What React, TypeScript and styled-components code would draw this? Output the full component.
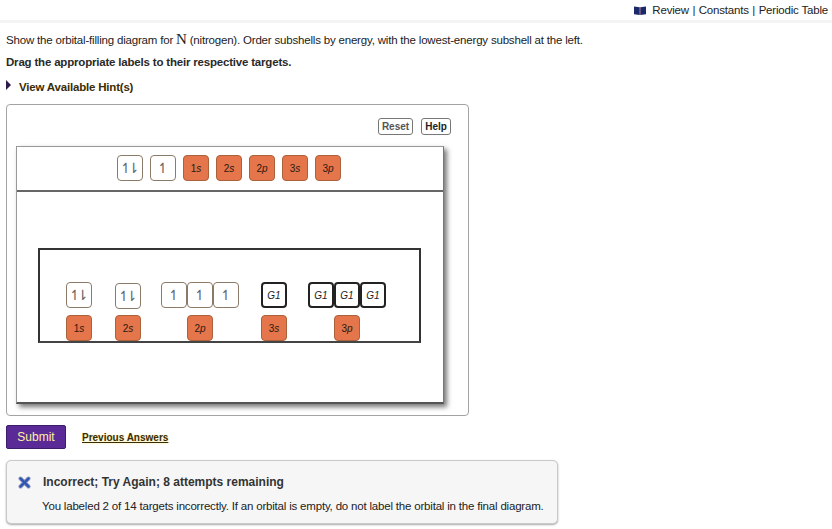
import React from 'react';
import styled, { createGlobalStyle } from 'styled-components';

const GlobalStyle = createGlobalStyle`
  html, body {
    margin: 0;
    padding: 0;
    background: #fff;
    font-family: "Liberation Sans", Arial, sans-serif;
    color: #222;
  }
`;

const Page = styled.div`
  width: 832px;
  height: 529px;
  overflow: hidden;
`;

const TopBar = styled.div`
  height: 20px;
  border-bottom: 3px solid #f4f4f4;
  box-sizing: content-box;
  display: flex;
  align-items: center;
  justify-content: flex-end;
  padding-right: 4px;
  font-size: 11.5px;
  letter-spacing: -0.19px;
  color: #222;
`;

const BookIcon = styled.svg`
  width: 12px;
  height: 9px;
  margin-right: 6px;
`;

const Intro = styled.p`
  margin: 9px 0 0 6px;
  font-size: 11.5px;
  letter-spacing: -0.19px;
  line-height: 15px;
  height: 15px;
`;

const Element = styled.span`
  font-family: "Liberation Serif", serif;
  font-size: 15px;
`;

const Instruction = styled.p`
  margin: 8px 0 0 6px;
  font-size: 11.5px;
  letter-spacing: -0.19px;
  line-height: 15px;
  font-weight: bold;
  color: #2a2a2a;
`;

const HintRow = styled.div`
  margin: 9px 0 0 6px;
  display: flex;
  align-items: center;
  height: 16px;
  font-size: 11.5px;
  letter-spacing: -0.19px;
  font-weight: bold;
  color: #3a2c05;
`;

const HintArrow = styled.span`
  width: 0;
  height: 0;
  margin: -4px 8px 0 0;
  border-left: 5px solid #2e1a4a;
  border-top: 5px solid transparent;
  border-bottom: 5px solid transparent;
`;

const Panel = styled.div`
  margin: 9px 0 0 6px;
  width: 463px;
  height: 312px;
  box-sizing: border-box;
  border: 1px solid #a3a3a3;
  border-radius: 4px;
  padding: 13px 17px 0 9px;
`;

const Toolbar = styled.div`
  display: flex;
  justify-content: flex-end;
  gap: 8px;
`;

const ToolButton = styled.button<{ $w: number; $dark?: boolean }>`
  width: ${p => p.$w}px;
  height: 17px;
  box-sizing: border-box;
  padding: 0;
  background: #fff;
  border: 1px solid #777;
  border-radius: 3px;
  font: bold 10px "Liberation Sans", Arial, sans-serif;
  color: ${p => (p.$dark ? '#222' : '#555')};
`;

const Diagram = styled.div`
  margin-top: 11px;
  width: 428px;
  height: 258px;
  box-sizing: border-box;
  border-top: 1px solid #999;
  border-left: 1px solid #999;
  border-right: 1px solid #777;
  border-bottom: 2px solid #555;
  box-shadow: 3px 3px 5px #777;
`;

const Tray = styled.div`
  height: 45px;
  box-sizing: border-box;
  border-bottom: 2px solid #666;
  display: flex;
  justify-content: flex-start;
  align-items: flex-start;
  gap: 7px;
  padding: 8px 0 0 100px;
`;

const Chip = styled.div<{ $w?: number }>`
  width: ${p => p.$w ?? 26}px;
  height: 26px;
  box-sizing: border-box;
  display: flex;
  align-items: center;
  justify-content: center;
  border-radius: 4px;
  font-size: 10px;
`;

const ArrowChip = styled(Chip)`
  background: #fff;
  border: 1px solid #8c7a68;
  font-family: "DejaVu Sans", sans-serif;
  font-size: 14px;
  letter-spacing: -4px;
  padding-right: 4px;
  color: #666;
`;

const LabelChip = styled(Chip)`
  background: #e5754a;
  border: 1px solid #a9623c;
  color: #2a1a12;
`;

const GhostChip = styled(Chip)`
  background: #fff;
  border: 2px solid #222;
  color: #222;
  font-style: italic;
  font-weight: normal;
`;

const Sub = styled.i`
  font-style: italic;
`;

const Board = styled.div`
  margin: 56px 0 0 21px;
  width: 383px;
  height: 95px;
  box-sizing: border-box;
  border: 2px solid #333;
  border-bottom-color: #444;
  display: flex;
  align-items: flex-start;
  padding: 32px 0 0 26px;
`;

const Column = styled.div<{ $gap: number; $drop?: number }>`
  margin-left: ${p => p.$gap}px;
  display: flex;
  flex-direction: column;
  align-items: center;
  gap: ${p => 7 - (p.$drop ?? 0)}px;
`;

const Cells = styled.div<{ $drop?: number }>`
  display: flex;
  margin-top: ${p => p.$drop ?? 0}px;
`;

const Footer = styled.div`
  margin: 9px 0 0 6px;
  display: flex;
  align-items: center;
  gap: 16px;
`;

const Submit = styled.button`
  width: 60px;
  height: 24px;
  padding: 0;
  background: #5a2a96;
  border: 1px solid #3d1c6b;
  border-radius: 2px;
  font: 12px "Liberation Sans", Arial, sans-serif;
  color: #fff0a0;
`;

const PrevLink = styled.a`
  font-size: 10px;
  font-weight: bold;
  color: #3a2c05;
  text-decoration: underline;
  text-shadow: 0 0 2px #ffe98a;
`;

const Feedback = styled.div`
  margin: 11px 0 0 6px;
  width: 552px;
  height: 64px;
  box-sizing: border-box;
  background: #f6f6f6;
  border: 1px solid #c9c9c9;
  border-radius: 5px;
  box-shadow: 0 1px 2px #aaa;
  padding: 14px 0 0 11px;
`;

const FeedbackHead = styled.div`
  display: flex;
  align-items: center;
  gap: 12px;
  font-size: 12px;
  font-weight: bold;
  color: #333;
`;

const CrossIcon = styled.svg`
  width: 13px;
  height: 13px;
`;

const FeedbackBody = styled.p`
  margin: 10px 0 0 24px;
  font-size: 11.5px;
  letter-spacing: -0.19px;
  line-height: 14px;
  color: #222;
  white-space: nowrap;
`;

const Pipe = styled.span`
  margin: 0 3.5px;
`;

const PAIR = '↿⇂';
const ONE = '↿';

const labels: [string, string][] = [['1', 's'], ['2', 's'], ['2', 'p'], ['3', 's'], ['3', 'p']];

const Label = ({ n, s }: { n: string; s: string }) => (
  <LabelChip>
    {n}
    <Sub>{s}</Sub>
  </LabelChip>
);

export default function App() {
  return (
    <Page>
      <GlobalStyle />
      <TopBar>
        <BookIcon viewBox="0 0 12 9">
          <path d="M0 0.5 L5.6 1.2 V9 L0 8.2 Z" fill="#1a2a6c" />
          <path d="M12 0.5 L6.4 1.2 V9 L12 8.2 Z" fill="#1a2a6c" />
          <path d="M5.6 1.2 H6.4 V9 H5.6 Z" fill="#5a1f3a" />
        </BookIcon>
        Review<Pipe>|</Pipe>Constants<Pipe>|</Pipe>Periodic Table
      </TopBar>
      <Intro>
        Show the orbital-filling diagram for <Element>N</Element> (nitrogen). Order subshells by energy, with the
        lowest-energy subshell at the left.
      </Intro>
      <Instruction>Drag the appropriate labels to their respective targets.</Instruction>
      <HintRow>
        <HintArrow />
        View Available Hint(s)
      </HintRow>
      <Panel>
        <Toolbar>
          <ToolButton $w={35}>Reset</ToolButton>
          <ToolButton $w={30} $dark>Help</ToolButton>
        </Toolbar>
        <Diagram>
          <Tray>
            <ArrowChip>{PAIR}</ArrowChip>
            <ArrowChip>{ONE}</ArrowChip>
            {labels.map(([n, s]) => (
              <Label key={n + s} n={n} s={s} />
            ))}
          </Tray>
          <Board>
            <Column $gap={0}>
              <Cells>
                <ArrowChip>{PAIR}</ArrowChip>
              </Cells>
              <Label n="1" s="s" />
            </Column>
            <Column $gap={23} $drop={1}>
              <Cells $drop={1}>
                <ArrowChip>{PAIR}</ArrowChip>
              </Cells>
              <Label n="2" s="s" />
            </Column>
            <Column $gap={20}>
              <Cells>
                <ArrowChip>{ONE}</ArrowChip>
                <ArrowChip>{ONE}</ArrowChip>
                <ArrowChip>{ONE}</ArrowChip>
              </Cells>
              <Label n="2" s="p" />
            </Column>
            <Column $gap={22}>
              <Cells>
                <GhostChip>G1</GhostChip>
              </Cells>
              <Label n="3" s="s" />
            </Column>
            <Column $gap={21}>
              <Cells>
                <GhostChip>G1</GhostChip>
                <GhostChip>G1</GhostChip>
                <GhostChip>G1</GhostChip>
              </Cells>
              <Label n="3" s="p" />
            </Column>
          </Board>
        </Diagram>
      </Panel>
      <Footer>
        <Submit>Submit</Submit>
        <PrevLink>Previous Answers</PrevLink>
      </Footer>
      <Feedback>
        <FeedbackHead>
          <CrossIcon viewBox="0 0 13 13">
            <path d="M2.5 2.5 L10.5 10.5 M10.5 2.5 L2.5 10.5" stroke="#8a94b8" strokeWidth="4" strokeLinecap="round" />
            <path d="M2.5 2.5 L10.5 10.5 M10.5 2.5 L2.5 10.5" stroke="#2f55b5" strokeWidth="2.4" strokeLinecap="round" />
          </CrossIcon>
          Incorrect; Try Again; 8 attempts remaining
        </FeedbackHead>
        <FeedbackBody>
          You labeled 2 of 14 targets incorrectly. If an orbital is empty, do not label the orbital in the final diagram.
        </FeedbackBody>
      </Feedback>
    </Page>
  );
}
